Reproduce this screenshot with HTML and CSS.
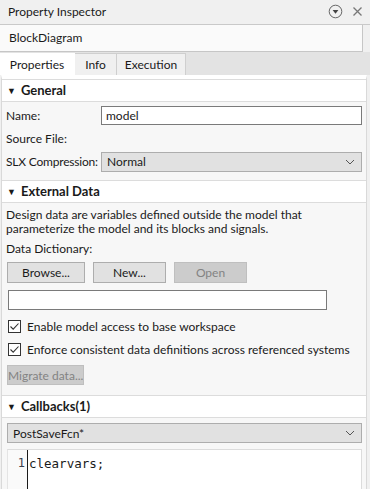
FILE: index.html
```html
<!DOCTYPE html>
<html lang="en">
<head>
    <meta charset="UTF-8">
    <title>Property Inspector</title>
    <link rel="stylesheet" href="styles.css">
</head>
<body>
    <div class="titlebar">
        <span class="title">Property Inspector</span>
        <span class="title-icons">
            <svg width="15" height="15" viewBox="0 0 15 15">
                <circle cx="7.5" cy="7.5" r="6.3" fill="none" stroke="#666" stroke-width="1"/>
                <path d="M4.6 6 L10.4 6 L7.5 9.8 Z" fill="#444"/>
            </svg>
            <svg width="9" height="9" viewBox="0 0 9 9">
                <path d="M0.5 0.5 L8.5 8.5 M8.5 0.5 L0.5 8.5" stroke="#777" stroke-width="1.3"/>
            </svg>
        </span>
    </div>

    <div class="pathbar">BlockDiagram</div>

    <div class="tabstrip">
        <div class="tab active">Properties</div>
        <div class="tab info">Info</div>
        <div class="tab exec">Execution</div>
    </div>

    <div class="panel">
        <!-- General -->
        <div class="section-head"><span class="caret">&#9660;</span>General</div>
        <div class="section-body general">
            <div class="row">
                <label class="row-label">Name:</label>
                <div class="textbox">model</div>
            </div>
            <div class="row">
                <label class="row-label">Source File:</label>
            </div>
            <div class="row">
                <label class="row-label slx">SLX Compression:</label>
                <div class="dropdown">
                    <span>Normal</span>
                    <svg class="chev" width="10" height="6" viewBox="0 0 10 6"><path d="M1 1 L5 5 L9 1" fill="none" stroke="#555" stroke-width="1"/></svg>
                </div>
            </div>
        </div>

        <!-- External Data -->
        <div class="section-head"><span class="caret">&#9660;</span>External Data</div>
        <div class="section-body ext">
            <p class="desc">Design data are variables defined outside the model that<br>parameterize the model and its blocks and signals.</p>
            <p class="plain">Data Dictionary:</p>
            <div class="buttons">
                <button class="btn browse">Browse...</button>
                <button class="btn">New...</button>
                <button class="btn disabled">Open</button>
            </div>
            <div class="textbox dict"></div>
            <div class="check first">
                <svg width="13" height="13" viewBox="0 0 13 13"><rect x="0.5" y="0.5" width="12" height="12" fill="#fff" stroke="#333"/><path d="M2.5 6.5 L5.2 9.2 L10.5 3.5" fill="none" stroke="#333" stroke-width="1.1"/></svg>
                <span>Enable model access to base workspace</span>
            </div>
            <div class="check">
                <svg width="13" height="13" viewBox="0 0 13 13"><rect x="0.5" y="0.5" width="12" height="12" fill="#fff" stroke="#333"/><path d="M2.5 6.5 L5.2 9.2 L10.5 3.5" fill="none" stroke="#333" stroke-width="1.1"/></svg>
                <span>Enforce consistent data definitions across referenced systems</span>
            </div>
            <button class="btn disabled migrate">Migrate data...</button>
        </div>

        <!-- Callbacks -->
        <div class="section-head"><span class="caret">&#9660;</span>Callbacks(1)</div>
        <div class="section-body cb">
            <div class="dropdown wide">
                <span>PostSaveFcn*</span>
                <svg class="chev" width="10" height="6" viewBox="0 0 10 6"><path d="M1 1 L5 5 L9 1" fill="none" stroke="#555" stroke-width="1"/></svg>
            </div>
            <div class="editor">
                <div class="gutter">1</div>
                <div class="code">clearvars;</div>
            </div>
        </div>
    </div>
</body>
</html>
```

FILE: styles.css
```css
/* Base */
body {
    margin: 0;
    width: 370px;
    height: 489px;
    overflow: hidden;
    background: #f0f0f0;
    font-family: Lato, "Liberation Sans", sans-serif;
    font-size: 12px;
    color: #1a1a1a;
}

/* Title bar */
.titlebar {
    height: 25px;
    display: flex;
    align-items: center;
    justify-content: space-between;
    padding: 0 8px 1px 8px;
    background: #f0f0f0;
    border-bottom: 1px solid #c9c9c9;
    box-sizing: border-box;
}

.title-icons {
    display: flex;
    align-items: center;
    gap: 10px;
}

/* Current object */
.pathbar {
    height: 27px;
    line-height: 26px;
    padding-left: 9px;
    margin-right: 7px;
    background: #fafafa;
    border-right: 1px solid #c6c6c6;
    border-bottom: 1px solid #c6c6c6;
    box-sizing: border-box;
}

/* Tabs */
.tabstrip {
    display: flex;
    height: 22px;
    background: #e3e3e3;
    padding-top: 1px;
}

.tab {
    box-sizing: border-box;
    text-align: center;
    line-height: 21px;
    background: #f0f0f0;
    border: 1px solid #cfcfcf;
    border-bottom: none;
    border-left: none;
    white-space: nowrap;
}

.tab.active {
    background: #fff;
    border-color: #fff;
    width: 75px;
}

.tab.info {
    width: 42px;
}

.tab.exec {
    width: 69px;
}

/* Main panel */
.panel {
    margin: 0 3px 0 1px;
    background: #f7f7f7;
    border-left: 1px solid #d9d9d9;
    border-right: 1px solid #d9d9d9;
    border-top: 4px solid #fff;
    height: 420px;
}

.section-head {
    background: #fff;
    font-weight: bold;
    font-size: 13px;
    height: 21px;
    line-height: 21px;
    padding-left: 5px;
    border-top: 1px solid #dcdcdc;
    border-bottom: 1px solid #dcdcdc;
}

.caret {
    font-size: 9px;
    margin-right: 5px;
    vertical-align: 1px;
}

.section-body {
    padding: 2px 4px 7px 4px;
}

.row {
    display: flex;
    align-items: center;
    height: 23px;
    white-space: nowrap;
}

.row-label {
    width: 95px;
}

.row-label.slx {
    letter-spacing: -0.2px;
}

.textbox {
    flex: 1;
    height: 19px;
    line-height: 17px;
    padding-left: 4px;
    background: #fff;
    border: 1px solid #7a7a7a;
    box-sizing: border-box;
}

.dropdown {
    flex: 1;
    display: flex;
    align-items: center;
    justify-content: space-between;
    height: 20px;
    padding: 0 6px 0 5px;
    background: #e1e1e1;
    border: 1px solid #adadad;
    box-sizing: border-box;
}

/* External data */
.ext {
    padding-top: 5px;
    padding-bottom: 10px;
}

.desc {
    margin: 0;
    line-height: 14px;
    white-space: nowrap;
}

.plain {
    margin: 6px 0 0 0;
    line-height: 14px;
}

.buttons {
    display: flex;
    gap: 8px;
    margin-top: 6px;
    padding-left: 1px;
}

.btn {
    font-family: inherit;
    font-size: 12px;
    height: 21px;
    width: 73px;
    background: #e1e1e1;
    border: 1px solid #adadad;
    color: #1a1a1a;
    padding: 0;
    white-space: nowrap;
}

.btn.browse {
    width: 78px;
}

.btn.disabled {
    background: #cccccc;
    border-color: #bfbfbf;
    color: #838383;
}

.textbox.dict {
    width: 319px;
    flex: none;
    height: 20px;
    margin: 7px 0 0 2px;
}

.check {
    display: flex;
    align-items: center;
    gap: 6px;
    height: 23px;
    padding-left: 2px;
    white-space: nowrap;
}

.check.first {
    margin-top: 5px;
}

.btn.migrate {
    width: 77px;
    height: 20px;
    margin: 4px 0 0 1px;
}

/* Callbacks */
.cb {
    padding: 5px 4px 0 5px;
}

.dropdown.wide {
    width: auto;
}

.editor {
    display: flex;
    margin-top: 6px;
    height: 60px;
    background: #fff;
    border-top: 1px solid #dcdcdc;
    border-left: 1px solid #e4e4e4;
    border-right: 1px solid #dcdcdc;
}

.gutter {
    width: 17px;
    background: #fafafa;
    border-right: 1px solid #1a1a1a;
    text-align: right;
    padding-right: 2px;
    padding-top: 6px;
    font-family: "DejaVu Sans Mono", monospace;
    font-size: 12px;
    color: #3a3f4a;
}

.code {
    padding: 6px 0 0 1px;
    font-family: "DejaVu Sans Mono", monospace;
    font-size: 12.5px;
    color: #1a1a1a;
}
```
